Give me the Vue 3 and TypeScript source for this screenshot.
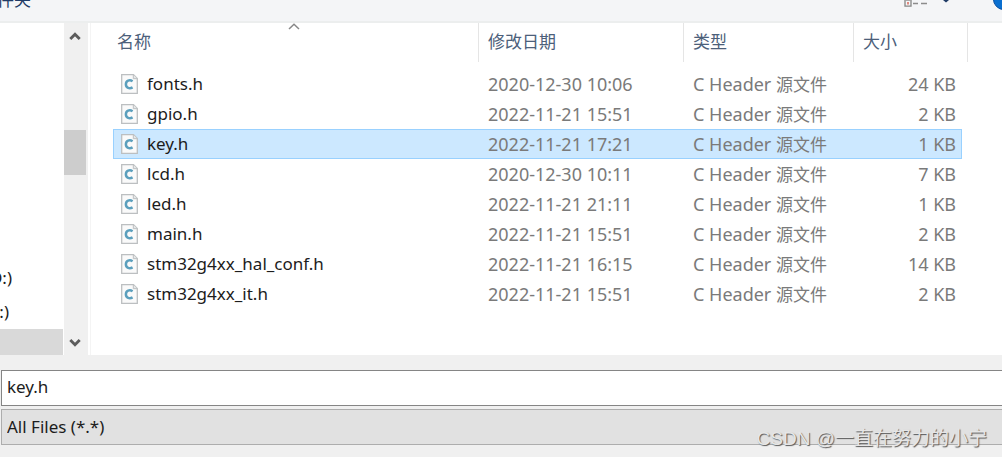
<script setup lang="ts">
import { ref } from 'vue'

interface FileEntry {
  name: string
  modified: string
  size: string
}

const files: FileEntry[] = [
  { name: 'fonts.h', modified: '2020-12-30 10:06', size: '24 KB' },
  { name: 'gpio.h', modified: '2022-11-21 15:51', size: '2 KB' },
  { name: 'key.h', modified: '2022-11-21 17:21', size: '1 KB' },
  { name: 'lcd.h', modified: '2020-12-30 10:11', size: '7 KB' },
  { name: 'led.h', modified: '2022-11-21 21:11', size: '1 KB' },
  { name: 'main.h', modified: '2022-11-21 15:51', size: '2 KB' },
  { name: 'stm32g4xx_hal_conf.h', modified: '2022-11-21 16:15', size: '14 KB' },
  { name: 'stm32g4xx_it.h', modified: '2022-11-21 15:51', size: '2 KB' },
]

const fileName = ref('key.h')
const fileFilter = ref('all')
</script>

<template>
  <div class="dialog">
    <header class="toolbar">
      <button class="new-folder" type="button"><span>件夹</span></button>
      <div class="tools">
        <button class="tool view" type="button" aria-label="View">
          <svg width="24" height="8" viewBox="0 0 24 8">
            <path d="M1 0V6.200H7V0" fill="none" stroke="#858585" stroke-width="1.300" />
            <path d="M1 .4H7" stroke="#a0a0a0" />
            <rect x="3" y="2" width="2" height="2.500" fill="#e08a80" />
            <path d="M9 3.500h5M17 3.500h6" stroke="#8c8c8c" stroke-width="1.500" />
          </svg>
        </button>
        <button class="tool more" type="button" aria-label="More views">
          <svg width="8" height="4" viewBox="0 0 8 4"><path d="M1 0h6L4 2.500z" fill="#1f3b66" /></svg>
        </button>
        <button class="tool help" type="button" aria-label="Help">
          <svg width="9" height="11" viewBox="0 0 9 11"><circle cx="11" cy="-1" r="10.600" fill="#0a6fd0" stroke="#0b4fa0" /></svg>
        </button>
      </div>
    </header>

    <main class="browser">
      <nav class="tree">
        <a class="drive" href="#d"><span>D:)</span></a>
        <a class="drive second" href="#e"><span>:)</span></a>
        <a class="drive current" href="#f" aria-label="Current drive"></a>
      </nav>
      <div class="scrollbar">
        <button type="button" aria-label="Scroll up">
          <svg width="12" height="10" viewBox="0 0 12 10"><path d="M1.300 8L6 3.300L10.700 8" fill="none" stroke="#5c5c5c" stroke-width="2.900" /></svg>
        </button>
        <div class="track"><div class="thumb"></div></div>
        <button type="button" aria-label="Scroll down">
          <svg width="12" height="10" viewBox="0 0 12 10"><path d="M1.300 2L6 6.700L10.700 2" fill="none" stroke="#5c5c5c" stroke-width="2.900" /></svg>
        </button>
      </div>

      <section class="listing">
        <table>
          <colgroup>
            <col />
            <col class="c-date" />
            <col class="c-type" />
            <col class="c-size" />
            <col class="c-end" />
          </colgroup>
          <thead>
            <tr>
              <th class="sorted" scope="col">
                名称
                <svg class="sort" width="12" height="7" viewBox="0 0 12 7"><path d="M1 6L6 1.200L11 6" fill="none" stroke="#888" stroke-width="1.500" /></svg>
              </th>
              <th scope="col">修改日期</th>
              <th scope="col">类型</th>
              <th scope="col" colspan="2">大小</th>
            </tr>
          </thead>
          <tbody>
            <tr v-for="file in files" :key="file.name" :class="{ selected: file.name === fileName }">
              <td class="name">
                <div class="file">
                  <svg width="17" height="20" viewBox="0 0 17 20">
                    <path d="M.7.700H12.500L16.300 4.500V19.300H.7z" fill="#fafafa" stroke="#bcbfc1" stroke-width="1.300" />
                    <path d="M12.300.700V4.700H16.300" fill="#e6e8e9" stroke="#bcbfc1" />
                    <path d="M11.600 7.200C8.600 5.400 4.900 6.500 4.900 10.300S8.600 15.200 11.600 13.400" fill="none" stroke="#5b9fbd" stroke-width="2.500" />
                  </svg>
                  <span>{{ file.name }}</span>
                </div>
              </td>
              <td>{{ file.modified }}</td>
              <td>C Header <span class="han">源文件</span></td>
              <td class="size">{{ file.size }}</td>
            </tr>
          </tbody>
        </table>
      </section>
    </main>

    <footer class="fields">
      <input v-model="fileName" type="text" aria-label="File name" />
      <select v-model="fileFilter" aria-label="File type">
        <option value="all">All Files (*.*)</option>
      </select>
    </footer>
    <div class="watermark">CSDN @一直在努力的小宁</div>
  </div>
</template>

<style>
body {
  margin: 0;
}
</style>

<style scoped>
.dialog {
  position: relative;
  display: flex;
  flex-direction: column;
  min-height: 100vh;
  overflow: hidden;
  background: #f0f0f0;
  color: #1c1c1c;
  font: 17px/30px "Noto Sans", "Noto Sans CJK SC", sans-serif;
}

.dialog * {
  box-sizing: border-box;
}

button {
  padding: 0;
  border: 0;
  background: none;
  color: inherit;
  font: inherit;
}

.toolbar {
  display: flex;
  justify-content: space-between;
  height: 23px;
  overflow: hidden;
  border-bottom: 2px solid #eceeee;
  background: #f4f5f7;
}

.new-folder {
  display: flex;
  align-items: flex-end;
  justify-content: flex-end;
  width: 31px;
  height: 15px;
  overflow: hidden;
  color: #1f3b66;
  white-space: nowrap;
}

.tools {
  display: flex;
  align-items: flex-start;
}

.tool {
  display: flex;
}

.more {
  margin: 0 43px 0 14px;
}

.browser {
  display: flex;
  flex: 1;
  background: #fff;
}

.tree {
  display: flex;
  flex-direction: column;
  justify-content: flex-end;
  width: 64px;
}

.drive {
  display: flex;
  justify-content: flex-end;
  width: 12px;
  height: 34px;
  padding-top: 2px;
  overflow: hidden;
  color: #1c1c1c;
  text-decoration: none;
}

.second {
  width: 9px;
}

.current {
  width: 63px;
  height: 26px;
  background: #d9d9d9;
}

.scrollbar {
  display: flex;
  flex-direction: column;
  width: 24px;
  background: #f0f0f0;
}

.scrollbar button {
  display: flex;
  align-items: center;
  justify-content: center;
  width: 22px;
  height: 25px;
}

.track {
  flex: 1;
  padding-top: 82px;
}

.thumb {
  width: 22px;
  height: 45px;
  background: #cdcdcd;
}

.listing {
  flex: 1;
  margin-left: 2px;
  padding: 0 34px 0 22px;
  border-left: 1px solid #f4f4f4;
}

table {
  width: 100%;
  border-collapse: separate;
  border-spacing: 0;
  table-layout: fixed;
}

.c-date {
  width: 205px;
}

.c-type {
  width: 170px;
}

.c-size {
  width: 108px;
}

.c-end {
  width: 6px;
}

th {
  position: relative;
  height: 39px;
  padding: 0 8px 2px 9px;
  border-right: 1px solid #e5e5e5;
  color: #4c607a;
  font-weight: 400;
  text-align: left;
}

th.sorted {
  padding-left: 4px;
}

.sort {
  position: absolute;
  top: 0;
  left: 50%;
  margin-left: -8px;
}

tbody::before {
  display: block;
  height: 7px;
  content: "";
}

td {
  height: 30px;
  padding: 0 5px 0 9px;
  border: solid transparent;
  border-width: 1px 0;
  color: #7a7a7a;
  font-size: 18px;
  line-height: 24px;
  vertical-align: middle;
  white-space: nowrap;
}

td.name {
  padding-left: 7px;
  border-left-width: 1px;
  color: #1c1c1c;
  font-size: 17px;
}

.han {
  font-size: 17px;
}

.file {
  display: flex;
  align-items: center;
  gap: 9px;
}

.size {
  border-right-width: 1px;
  text-align: right;
}

.selected td {
  border-color: #99d1ff;
  background: #cce8ff;
}

.fields {
  display: flex;
  flex-direction: column;
  gap: 3px;
  padding: 15px 0 12px 1px;
}

input,
select {
  width: 100%;
  height: 36px;
  margin: 0;
  padding: 0 5px;
  border: 1px solid #858585;
  border-right: 0;
  border-radius: 0;
  outline: 0;
  appearance: none;
  background: #fff;
  color: #1c1c1c;
  font: inherit;
}

input {
  padding-bottom: 3px;
}

select {
  border-color: #adadad;
  background: #e1e1e1;
}

.watermark {
  position: absolute;
  right: 15px;
  bottom: 4px;
  color: #e6e6e6;
  font: 19px/28px "Liberation Sans", "Noto Sans CJK SC", sans-serif;
  text-shadow: 1px 1px 1px #555;
  pointer-events: none;
}
</style>
